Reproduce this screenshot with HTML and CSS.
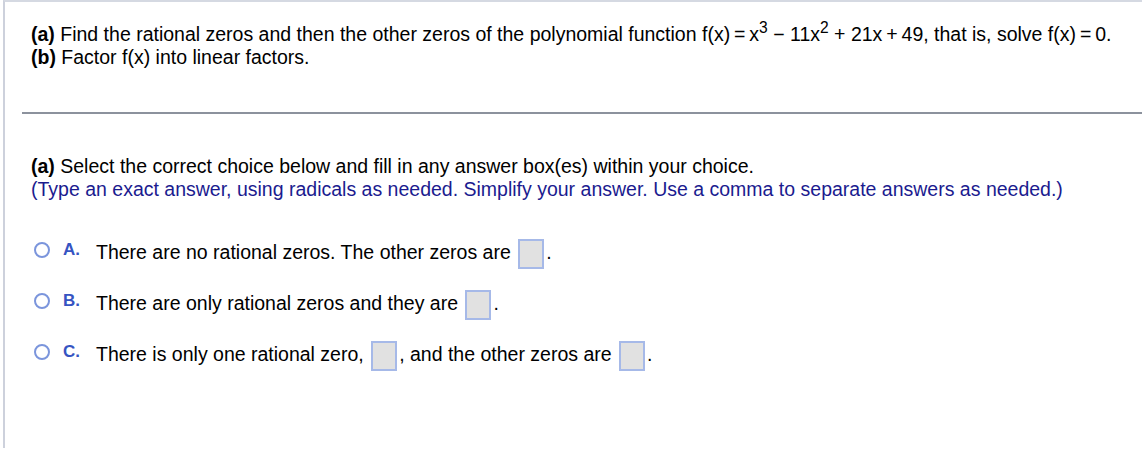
FILE: index.html
```html
<!DOCTYPE html>
<html lang="en">
<head>
<meta charset="utf-8">
<title>Rational zeros</title>
<link rel="stylesheet" href="styles.css">
</head>
<body>
<div class="frame">
  <div class="prompt">
    <p class="line"><b>(a)</b> Find the rational zeros and then the other zeros of the polynomial function f(x)&#8201;=&#8201;x<sup>3</sup> &#8722; 11x<sup>2</sup> + 21x&#8201;+&#8201;49, that is, solve f(x)&#8201;=&#8201;0.</p>
    <p class="line"><b>(b)</b> Factor f(x) into linear factors.</p>
  </div>
  <div class="divider"></div>
  <div class="work">
    <p class="line"><b>(a)</b> Select the correct choice below and fill in any answer box(es) within your choice.</p>
    <p class="line hint">(Type an exact answer, using radicals as needed. Simplify your answer. Use a comma to separate answers as needed.)</p>
    <div class="options">
      <div class="option">
        <span class="radio"></span>
        <span class="letter">A.</span>
        <span class="text">There are no rational zeros. The other zeros are <span class="box"></span>.</span>
      </div>
      <div class="option">
        <span class="radio"></span>
        <span class="letter">B.</span>
        <span class="text">There are only rational zeros and they are <span class="box"></span>.</span>
      </div>
      <div class="option">
        <span class="radio"></span>
        <span class="letter">C.</span>
        <span class="text">There is only one rational zero, <span class="box"></span>, and the other zeros are <span class="box"></span>.</span>
      </div>
    </div>
  </div>
</div>
</body>
</html>
```
FILE: styles.css
```css
html, body {
  margin: 0;
  padding: 0;
  background: #ffffff;
}

body {
  font-family: "Liberation Sans", Arial, sans-serif;
  color: #000000;
  font-size: 19.5px;
}

.frame {
  margin-left: 3px;
  border-left: 2px solid #cdd1dc;
  border-top: 2px solid #d5d9e2;
  height: 448px;
  box-sizing: border-box;
}

.line {
  margin: 0;
  line-height: 23px;
  white-space: nowrap;
}

.line sup {
  font-size: 0.8em;
  line-height: 0;
  vertical-align: 0.5em;
}

.prompt {
  padding: 21px 0 0 26px;
}

.divider {
  margin: 43px 0 0 17px;
  height: 2px;
  background: #8c929d;
}

.work {
  padding: 41px 0 0 26px;
}

.hint {
  color: #1b1b8f;
}

.options {
  padding-top: 38px;
  display: flex;
  flex-direction: column;
  gap: 21px;
}

.option {
  display: flex;
  align-items: center;
  height: 30px;
}

.radio {
  width: 16px;
  height: 16px;
  box-sizing: border-box;
  border: 2px solid #7b95dc;
  border-radius: 50%;
  margin-left: 3px;
  margin-top: -8px;
  flex: none;
}

.letter {
  width: 33px;
  margin-left: 13px;
  margin-top: -9px;
  font-size: 17px;
  font-weight: bold;
  color: #3654c2;
  flex: none;
}

.text {
  line-height: 23px;
  white-space: nowrap;
}

.box {
  display: inline-block;
  width: 26px;
  height: 30px;
  box-sizing: border-box;
  border: 2px solid #a6b9e8;
  background: #e1e1e1;
  vertical-align: middle;
  margin: 0 2px 0 2px;
}
```
